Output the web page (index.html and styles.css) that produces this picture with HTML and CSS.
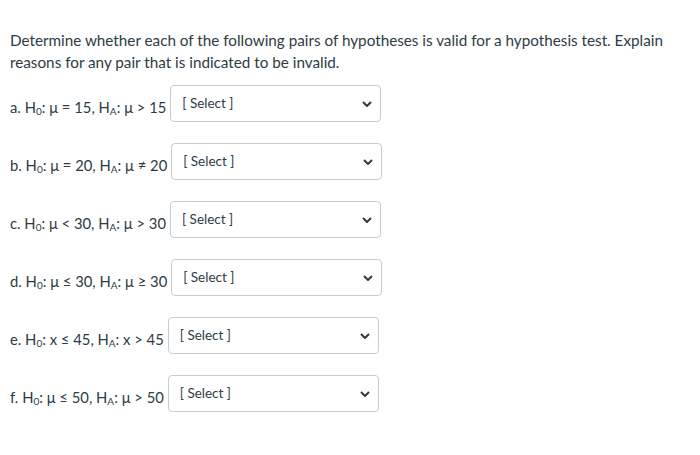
FILE: index.html
```html
<!DOCTYPE html>
<html lang="en">
<head>
<meta charset="utf-8">
<title>Hypotheses</title>
<link rel="stylesheet" href="styles.css">
</head>
<body>
<div class="question">
  <p class="prompt">Determine whether each of the following pairs of hypotheses is valid for a hypothesis test. Explain reasons for any pair that is indicated to be invalid.</p>
  <div class="rows">
    <div class="row">
      <span class="label">a. H<sub>0</sub>: μ = 15, H<sub>A</sub>: μ &gt; 15</span>
      <div class="select"><span>[ Select ]</span><svg class="chev" viewBox="0 0 10 6" width="10" height="6"><path d="M1 1l4 4 4-4" fill="none" stroke="#2d3b45" stroke-width="2"/></svg></div>
    </div>
    <div class="row">
      <span class="label">b. H<sub>0</sub>: μ = 20, H<sub>A</sub>: μ ≠ 20</span>
      <div class="select"><span>[ Select ]</span><svg class="chev" viewBox="0 0 10 6" width="10" height="6"><path d="M1 1l4 4 4-4" fill="none" stroke="#2d3b45" stroke-width="2"/></svg></div>
    </div>
    <div class="row">
      <span class="label">c. H<sub>0</sub>: μ &lt; 30, H<sub>A</sub>: μ &gt; 30</span>
      <div class="select"><span>[ Select ]</span><svg class="chev" viewBox="0 0 10 6" width="10" height="6"><path d="M1 1l4 4 4-4" fill="none" stroke="#2d3b45" stroke-width="2"/></svg></div>
    </div>
    <div class="row">
      <span class="label">d. H<sub>0</sub>: μ ≤ 30, H<sub>A</sub>: μ ≥ 30</span>
      <div class="select"><span>[ Select ]</span><svg class="chev" viewBox="0 0 10 6" width="10" height="6"><path d="M1 1l4 4 4-4" fill="none" stroke="#2d3b45" stroke-width="2"/></svg></div>
    </div>
    <div class="row">
      <span class="label">e. H<sub>0</sub>: x ≤ 45, H<sub>A</sub>: x &gt; 45</span>
      <div class="select"><span>[ Select ]</span><svg class="chev" viewBox="0 0 10 6" width="10" height="6"><path d="M1 1l4 4 4-4" fill="none" stroke="#2d3b45" stroke-width="2"/></svg></div>
    </div>
    <div class="row">
      <span class="label">f. H<sub>0</sub>: μ ≤ 50, H<sub>A</sub>: μ &gt; 50</span>
      <div class="select"><span>[ Select ]</span><svg class="chev" viewBox="0 0 10 6" width="10" height="6"><path d="M1 1l4 4 4-4" fill="none" stroke="#2d3b45" stroke-width="2"/></svg></div>
    </div>
  </div>
</div>
</body>
</html>
```

FILE: styles.css
```css
html, body {
  margin: 0;
  padding: 0;
  background: #ffffff;
}

body {
  font-family: Lato, "Liberation Sans", sans-serif;
  color: #2d3b45;
}

.question {
  padding: 29px 10px 0 10px;
}

.prompt {
  margin: 0;
  font-size: 15.25px;
  line-height: 22px;
  width: 680px;
}

.rows {
  display: flex;
  flex-direction: column;
  gap: 21px;
  margin-top: 12px;
}

.row {
  display: flex;
  align-items: center;
  gap: 4px;
  font-size: 14.8px;
}

.label {
  white-space: nowrap;
  padding-top: 7px;
}

.label sub {
  font-size: 10px;
  vertical-align: -2px;
  line-height: 0;
}

.select {
  box-sizing: border-box;
  width: 211px;
  height: 37px;
  border: 1px solid #c7cdd1;
  border-radius: 4px;
  display: flex;
  align-items: center;
  justify-content: space-between;
  padding: 0 8px 2px 11px;
  font-size: 13.5px;
  color: #2d3b45;
}

.chev {
  display: block;
  margin-top: 2px;
}
```
